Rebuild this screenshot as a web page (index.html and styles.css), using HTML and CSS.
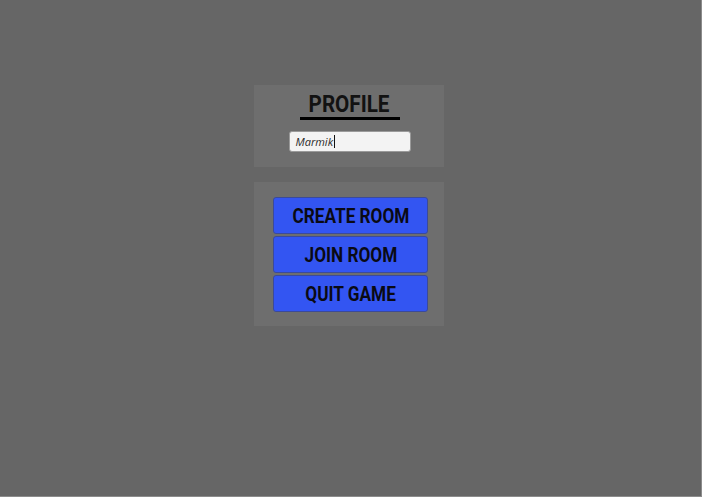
FILE: index.html
```html
<!DOCTYPE html>
<html lang="en">
<head>
    <meta charset="UTF-8">
    <meta name="viewport" content="width=device-width, initial-scale=1.0">
    <title>Menu</title>
    <link rel="stylesheet" href="styles.css">
</head>
<body>
    <div class="screen">
        <div class="menu">
            <div class="panel profile">
                <h1 class="title"><span>PROFILE</span></h1>
                <div class="name-input"><span class="name-text">Marmik</span><span class="caret"></span></div>
            </div>
            <div class="panel buttons">
                <button class="menu-btn"><span>CREATE ROOM</span></button>
                <button class="menu-btn"><span>JOIN ROOM</span></button>
                <button class="menu-btn"><span>QUIT GAME</span></button>
            </div>
        </div>
    </div>
</body>
</html>
```

FILE: styles.css
```css
html, body {
    margin: 0;
    padding: 0;
    height: 100%;
}

body {
    background-color: #666666;
    font-family: Roboto, "Liberation Sans", sans-serif;
}

.screen {
    box-sizing: border-box;
    height: 100vh;
    border-right: 1px solid #8c8c8c;
    border-bottom: 1px solid #8c8c8c;
    display: flex;
    justify-content: center;
    padding-right: 4px;
}

.menu {
    width: 190px;
    margin-top: 85px;
    display: flex;
    flex-direction: column;
    gap: 15px;
}

.panel {
    background: #6e6e6e;
    display: flex;
    flex-direction: column;
    align-items: center;
    box-sizing: border-box;
}

.profile {
    height: 82px;
    padding: 6px 0 0 2px;
}

.title {
    margin: 0;
    width: 100px;
    text-align: center;
    font-size: 24px;
    line-height: 26px;
    font-weight: 700;
    color: #121212;
    border-bottom: 3px solid #000;
}

.title span {
    display: inline-block;
    transform: scaleX(0.86);
}

.name-input {
    margin-top: 11px;
    width: 122px;
    height: 21px;
    box-sizing: border-box;
    border: 1px solid #9a9a9a;
    border-radius: 3px;
    background: #f3f3f3;
    padding: 0 6px;
    display: flex;
    align-items: center;
    font-family: "Open Sans", sans-serif;
    font-style: italic;
    font-size: 11px;
    color: #2a2a2a;
}

.caret {
    width: 1px;
    height: 13px;
    background: #111;
    margin-left: 1px;
}

.buttons {
    padding: 15px 0 14px 4px;
    gap: 2px;
}

.menu-btn {
    width: 155px;
    height: 37px;
    background: #3355f2;
    border: 1px solid #3b4a99;
    border-radius: 3px;
    font-family: Roboto, sans-serif;
    font-weight: 700;
    font-size: 20px;
    color: #0a0a14;
    cursor: pointer;
    padding: 0;
}

.menu-btn span {
    display: inline-block;
    transform: scaleX(0.86);
}
```
